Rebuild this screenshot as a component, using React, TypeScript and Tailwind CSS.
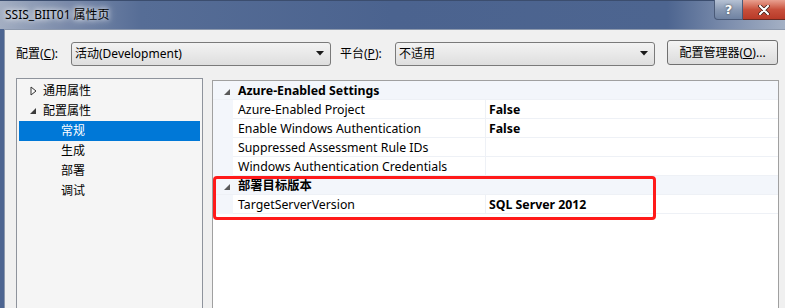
import React from "react";

const cjk = "font-['Noto_Sans','Noto_Sans_CJK_SC',sans-serif]";

function Down() {
  return (
    <svg width="8" height="5" viewBox="0 0 8 5" className="shrink-0">
      <polygon points="0,0 8,0 4,4.5" fill="#1a1a1a" />
    </svg>
  );
}

function Expanded({ color = "#3c3c3c" }: { color?: string }) {
  return (
    <svg width="6" height="6" viewBox="0 0 6 6" className="shrink-0">
      <polygon points="6,0 6,6 0,6" fill={color} />
    </svg>
  );
}

function Collapsed() {
  return (
    <svg width="7" height="10" viewBox="0 0 7 10" className="shrink-0">
      <polygon points="1,1 6,5 1,9" fill="#fafafa" stroke="#333" strokeWidth="1" />
    </svg>
  );
}

function Combo({ text, w }: { text: string; w: string }) {
  return (
    <div
      className={`${w} h-[24px] rounded-[3px] border border-[#7a7a7a] bg-gradient-to-b from-[#f3f3f3] to-[#dedede] flex items-center pl-[3px] pr-[6px] justify-between`}
    >
      <span className="text-[12px] text-black leading-none pt-[1px]">{text}</span>
      <Down />
    </div>
  );
}

type Row =
  | { kind: "cat"; label: string }
  | { kind: "prop"; label: string; value?: string };

const rows: Row[] = [
  { kind: "cat", label: "Azure-Enabled Settings" },
  { kind: "prop", label: "Azure-Enabled Project", value: "False" },
  { kind: "prop", label: "Enable Windows Authentication", value: "False" },
  { kind: "prop", label: "Suppressed Assessment Rule IDs" },
  { kind: "prop", label: "Windows Authentication Credentials" },
  { kind: "cat", label: "部署目标版本" },
  { kind: "prop", label: "TargetServerVersion", value: "SQL Server 2012" },
];

export default function App() {
  return (
    <div
      className={`w-[785px] h-[308px] overflow-hidden flex flex-col bg-[#4d6591] ${cjk}`}
    >
      {/* Title bar */}
      <div className="h-[29px] shrink-0 flex justify-between bg-[linear-gradient(to_right,#a3aec2_0%,#7c8cab_8%,#566d96_18%,#4b638f_50%,#4d6590_85%,#7e8fae_93%,#a4b0c4_100%)] border-t border-[#3b4d6e]">
        <div className="pl-[5px] pt-[5px] text-[12px] text-black [text-shadow:0_0_5px_#fff,0_0_8px_#fff]">
          SSIS_BIIT01 属性页
        </div>
        <div className="flex h-[19px] mt-[-1px]">
          <div className="w-[29px] h-[20px] border border-[#4a5a78] border-t-0 rounded-bl-[4px] bg-gradient-to-b from-[#b6c2d4] via-[#8a9ab4] to-[#6f82a2] flex items-center justify-center text-white font-bold text-[13px] font-['DejaVu_Sans',sans-serif] [text-shadow:0_0_2px_#333]">
            ?
          </div>
          <div className="w-[42px] h-[20px] border-b border-[#6b2a22] bg-gradient-to-b from-[#e8a090] via-[#c8503c] to-[#b83a28] flex items-center justify-center">
            <svg width="12" height="10" viewBox="0 0 12 10">
              <path d="M2 1 L10 9 M10 1 L2 9" stroke="#3a1a14" strokeWidth="3.6" strokeLinecap="round" />
              <path d="M2 1 L10 9 M10 1 L2 9" stroke="#ffffff" strokeWidth="2.2" strokeLinecap="round" />
            </svg>
          </div>
        </div>
      </div>

      {/* Body */}
      <div className="flex-1 ml-[4px] bg-[#f0f0f0] border-l border-t border-[#8d99ad] flex flex-col pl-[11px] pt-[11px]">
        {/* top row */}
        <div className="flex items-center h-[25px]">
          <span className="text-[12px] text-black w-[55px] pt-[1px]">
            配置(<span className="underline">C</span>):
          </span>
          <Combo text="活动(Development)" w="w-[260px]" />
          <span className="text-[12px] text-black ml-[9px] w-[55px] pt-[1px]">
            平台(<span className="underline">P</span>):
          </span>
          <Combo text="不适用" w="w-[260px]" />
          <div className="ml-[12px] mt-[-2px] w-[111px] h-[25px] rounded-[3px] border border-[#707070] bg-gradient-to-b from-[#f4f4f4] to-[#dcdcdc] flex items-center justify-center text-[12px] text-black">
            配置管理器(<span className="underline">O</span>)...
          </div>
        </div>

        {/* panels */}
        <div className="flex mt-[12px] flex-1 items-start">
          {/* tree */}
          <div className="w-[187px] h-[240px] border border-[#8e939c] bg-[#f5f5f5] pt-[2px] pl-[1px] pr-[1px]">
            <div className="h-[20px] flex items-center text-[12px] text-black">
              <div className="w-[25px] flex justify-end pr-[6px]">
                <Collapsed />
              </div>
              <span>通用属性</span>
            </div>
            <div className="h-[20px] flex items-center text-[12px] text-black">
              <div className="w-[25px] flex justify-end pr-[7px]">
                <Expanded />
              </div>
              <span>配置属性</span>
            </div>
            <div className="h-[20px] mx-[1px] flex items-center text-[12px] text-white bg-[#0078d7] pl-[42px]">
              常规
            </div>
            {["生成", "部署", "调试"].map((t) => (
              <div key={t} className="h-[20px] flex items-center text-[12px] text-black pl-[43px]">
                {t}
              </div>
            ))}
          </div>

          {/* property grid */}
          <div className="relative ml-[9px] mt-[2px] w-[567px] h-[240px] border border-[#a0a0a0] bg-white text-[12.3px]">
            {rows.map((r, i) =>
              r.kind === "cat" ? (
                <div key={i} className="h-[19px] flex items-center bg-[#f3f6fb] border-b border-[#eef1f6] pt-[3px]">
                  <div className="w-[25px] flex justify-end pr-[8px]">
                    <Expanded color="#5a5a5a" />
                  </div>
                  <span className="font-bold text-black">{r.label}</span>
                </div>
              ) : (
                <div key={i} className="h-[19px] flex">
                  <div className="w-[20px] bg-[#f3f6fb]" />
                  <div className="w-[253px] border-b border-r border-[#eef1f6] flex items-center pl-[5px] pt-[3px] text-black">
                    {r.label}
                  </div>
                  <div className="flex-1 border-b border-[#eef1f6] flex items-center pl-[3px] pt-[3px] font-bold text-black">
                    {r.value ?? ""}
                  </div>
                </div>
              )
            )}
            {/* annotation box */}
            <div className="absolute left-[0px] top-[95px] w-[443px] h-[44px] border-[3px] border-[#ff1a1a] rounded-[4px] pointer-events-none" />
          </div>
        </div>
      </div>
    </div>
  );
}
